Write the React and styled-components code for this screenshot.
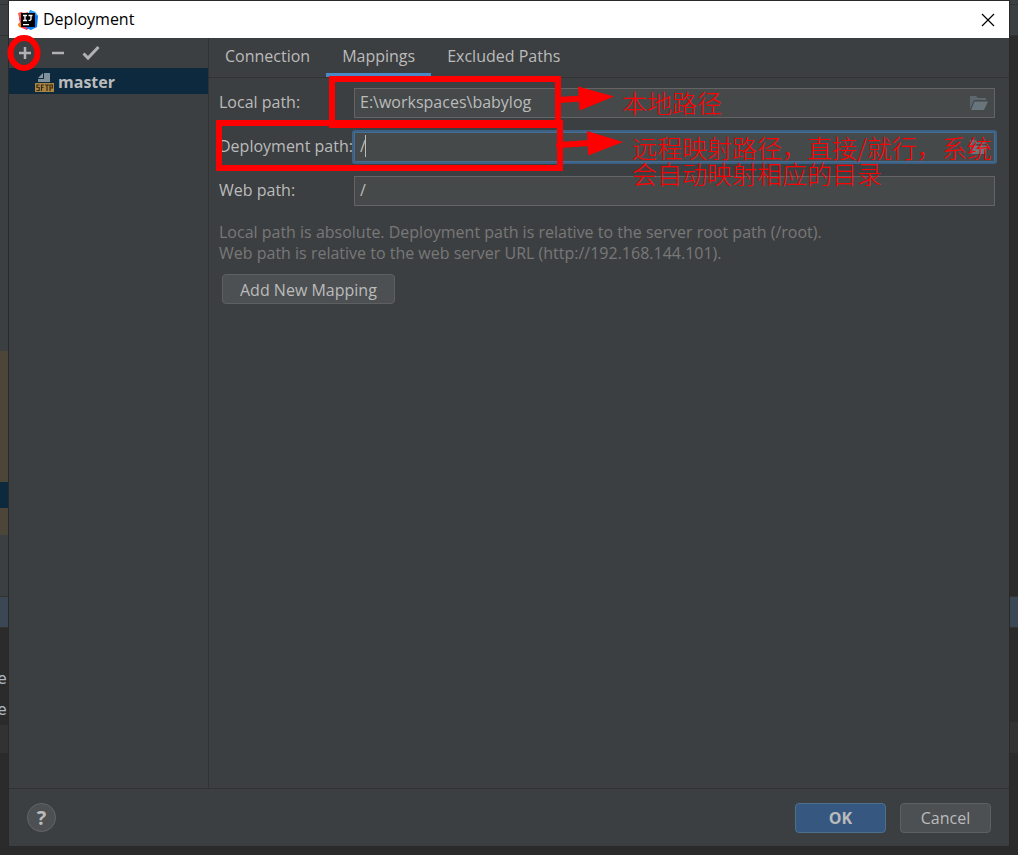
import React, { useState } from "react";
import styled, { createGlobalStyle, css } from "styled-components";

const GlobalStyle = createGlobalStyle`
  * {
    box-sizing: border-box;
  }

  body {
    margin: 0;
    background-color: #2b2b2b;
    color: #bbbbbb;
    font-family: "Open Sans", "Noto Sans", "Noto Sans CJK SC", sans-serif;
    font-size: 16px;
    line-height: 20px;
  }

  button,
  input {
    font: inherit;
    color: inherit;
  }
`;

const Desktop = styled.div`
  display: grid;
  grid-template-columns: 9px minmax(0, 1fr) 9px;
  min-height: 100vh;
  overflow: hidden;
`;

const Gutter = styled.div`
  display: flex;
  flex-direction: column;
  overflow: hidden;
`;

const Strip = styled.div`
  flex: none;
  height: ${(props) => props.$height}px;
  background-color: ${(props) => props.$color || "#2b2b2b"};
  border-top: ${(props) => (props.$line ? "1px solid #323232" : "none")};
`;

const Code = styled.div`
  display: flex;
  justify-content: flex-end;
  flex: none;
  height: 31px;
  padding-right: 2px;
  color: #a9b7c6;
  font-family: "DejaVu Sans Mono", monospace;
  font-size: 16px;
  line-height: 31px;
`;

const Dialog = styled.main`
  position: relative;
  display: flex;
  flex-direction: column;
  margin: 1px 0 9px;
  background-color: #3c3f41;
  box-shadow: 0 0 0 1px #292929;
`;

const TitleBar = styled.header`
  display: flex;
  align-items: center;
  gap: 5px;
  height: 37px;
  padding: 0 14px 0 9px;
  background-color: white;
  color: black;
`;

const Title = styled.h1`
  flex: 1;
  margin: 0;
  padding-bottom: 2px;
  font-size: 16px;
  font-weight: normal;
`;

const IconButton = styled.button`
  display: flex;
  padding: 0;
  border: none;
  background: none;
`;

const Body = styled.div`
  display: flex;
  flex: 1;
`;

const Sidebar = styled.aside`
  flex: none;
  width: 200px;
  border-right: 1px solid #323232;
`;

const Toolbar = styled.div`
  display: flex;
  align-items: center;
  gap: 15px;
  height: 30px;
  padding-left: 7px;
`;

const Server = styled.div`
  display: flex;
  align-items: center;
  gap: 4px;
  height: 26px;
  padding: 2px 0 0 26px;
  background-color: #0d293e;
  font-weight: bold;
`;

const Content = styled.section`
  flex: 1;
  min-width: 0;
`;

const Tabs = styled.div`
  display: flex;
  height: 40px;
  border-bottom: 1px solid #323232;
`;

const Tab = styled.button`
  padding: 0 16px;
  border: none;
  border-bottom: 4px solid
    ${(props) => (props.$active ? "#4a88c7" : "transparent")};
  background: none;
`;

const Form = styled.form`
  padding: 10px 14px 0 10px;
`;

const Row = styled.div`
  display: grid;
  grid-template-columns: 135px minmax(0, 1fr);
  align-items: center;
  margin-bottom: 14px;
`;

const Label = styled.label`
  padding-bottom: 2px;
  white-space: nowrap;
`;

const Field = styled.div`
  position: relative;
  display: flex;
  align-items: center;
  height: 30px;
  border: 1px solid #646464;
  background-color: #45494a;

  ${(props) =>
    props.$focused &&
    css`
      border-color: #466d94;
      box-shadow: 0 0 0 2px #3d6185;
      border-radius: 1px;
    `}
`;

const Input = styled.input`
  flex: 1;
  min-width: 0;
  padding: 0 5px 2px;
  border: none;
  outline: none;
  background: none;
`;

const Caret = styled.span`
  position: absolute;
  left: 10px;
  top: 2px;
  width: 1px;
  height: 22px;
  background-color: #bbbbbb;
`;

const Browse = styled(IconButton)`
  margin-right: 5px;
`;

const Hint = styled.p`
  margin: 0 0 10px;
  padding-top: 2px;
  color: #787878;
  line-height: 21px;
`;

const Button = styled.button`
  min-width: 91px;
  height: 30px;
  padding: 0 17px;
  border: 1px solid ${(props) => (props.$primary ? "#4c708c" : "#5e6060")};
  border-radius: 4px;
  background-color: ${(props) => (props.$primary ? "#365880" : "#4c5052")};
  font-weight: ${(props) => (props.$primary ? "bold" : "normal")};
`;

const AddButton = styled(Button)`
  margin-left: 3px;
  padding-top: 2px;
`;

const Footer = styled.footer`
  display: flex;
  align-items: center;
  gap: 14px;
  height: 58px;
  padding: 0 18px;
  border-top: 1px solid #323232;
`;

const Help = styled.button`
  width: 29px;
  height: 29px;
  margin-right: auto;
  padding: 0;
  border: 1px solid #646667;
  border-radius: 50%;
  background-color: #4c5052;
  font-size: 20px;
  font-weight: bold;
  line-height: 20px;
`;

const Marks = styled.svg`
  position: absolute;
  left: -9px;
  top: -1px;
  pointer-events: none;
`;

const Note = styled.div`
  position: absolute;
  left: ${(props) => props.$left}px;
  top: ${(props) => props.$top}px;
  color: #ff0000;
  font-family: "Noto Sans CJK SC", sans-serif;
  font-size: 25px;
  font-weight: 300;
  line-height: 26px;
  white-space: nowrap;
  pointer-events: none;
`;

const IdeaLogo = () => (
  <svg width="20" height="20" viewBox="0 0 20 20" aria-hidden="true">
    <path d="M0 3l3-1 3 1 4-1v8l-8 2z" fill="#fc5a4b" />
    <path d="M1 8l6-2 4 12-2 2-5-2-4-3 2-3z" fill="#fe315d" />
    <path d="M0 14l3-2 1 6-3-1z" fill="#f97a12" />
    <path d="M12 0l5 2 3 4-1 11-6 3-5-2 7-8z" fill="#087cfa" />
    <path d="M12 0l5 2 3 4-4-1-6-1z" fill="#249ff5" />
    <path d="M3 3h14v14H3z" fill="#000000" />
    <path
      d="M5 5.5h4M7 5.5v5M5 10.5h4M10.5 5.5h4M13 5.5V9q0 1.5-2.500 1.300"
      fill="none"
      stroke="#ffffff"
      strokeWidth="1.3"
    />
    <path d="M5 14h6v1.300H5z" fill="#ffffff" />
  </svg>
);

const SftpIcon = () => (
  <svg width="19" height="19" viewBox="0 0 19 19" aria-hidden="true">
    <path d="M8 0v5H3z" fill="#8796a0" />
    <path d="M9 0h6v9H3V6h6z" fill="#7f909b" />
    <path d="M0 10h19v9H0z" fill="#a98444" />
    <path
      d="M4.500 12H2v2.500h2.200v3H1.500M9 12H6.500v6M6.500 14.500h2M10 12h4M12 12v6M15 18v-6h2.300v3H15"
      fill="none"
      stroke="#3a2d12"
      strokeWidth="1.2"
    />
  </svg>
);

const FolderIcon = () => (
  <svg width="20" height="16" viewBox="0 0 20 16" aria-hidden="true">
    <path d="M1 14V1h6l2 2h8v2H5z" fill="#5d676d" />
    <path d="M5.500 6.500H19L15 15H2z" fill="#69757c" />
  </svg>
);

const PathField = ({ id, label, value, focused, browse }) => {
  const [text, setText] = useState(value);

  return (
    <Row>
      <Label htmlFor={id}>{label}</Label>
      <Field $focused={focused}>
        <Input
          id={id}
          type="text"
          value={text}
          onChange={(event) => setText(event.target.value)}
        />
        {focused && <Caret />}
        {browse && (
          <Browse type="button" aria-label="Browse">
            <FolderIcon />
          </Browse>
        )}
      </Field>
    </Row>
  );
};

const Annotations = () => (
  <>
    <Marks width="640" height="180" viewBox="0 0 640 180" aria-hidden="true">
      <g fill="none" stroke="#ff0000" strokeWidth="6">
        <ellipse cx="24" cy="53" rx="13.5" ry="15" />
        <rect x="332" y="79" width="226" height="46" />
        <rect x="219" y="123" width="341" height="45" />
        <path d="M558 100L582 98.500M559 145L590 143" strokeLinecap="round" />
      </g>
      <path
        d="M578 86.500L614 96.500L579.500 110.500zM587 131L623 142L588 155.500z"
        fill="#ff0000"
      />
    </Marks>
    <Note $left={613} $top={88}>
      本地路径
    </Note>
    <Note $left={623} $top={133}>
      远程映射路径，直接/就行，系统
      <br />
      会自动映射相应的目录
    </Note>
  </>
);

const TABS = ["Connection", "Mappings", "Excluded Paths"];

export default function App() {
  const [activeTab, setActiveTab] = useState("Mappings");

  return (
    <Desktop>
      <GlobalStyle />
      <Gutter>
        <Strip $height={4} $color="#3c3f41" />
        <Strip $height={31} $color="#3c3f41" $line />
        <Strip $height={316} $color="#3c3f41" $line />
        <Strip $height={131} $color="#4b4638" />
        <Strip $height={26} $color="#0d293e" />
        <Strip $height={27} $color="#4b4638" />
        <Strip $height={61} $color="#3c3f41" />
        <Strip $height={31} $color="#3b4754" $line />
        <Strip $height={36} $line />
        <Code>e</Code>
        <Code>e</Code>
        <Strip $height={28} $color="#323232" />
      </Gutter>
      <Dialog>
        <TitleBar>
          <IdeaLogo />
          <Title>Deployment</Title>
          <IconButton type="button" aria-label="Close">
            <svg width="14" height="14" viewBox="0 0 14 14">
              <path
                d="M1 1l12 12M13 1L1 13"
                stroke="#000000"
                strokeWidth="1.2"
              />
            </svg>
          </IconButton>
        </TitleBar>
        <Body>
          <Sidebar>
            <Toolbar>
              <IconButton type="button" aria-label="Add">
                <svg width="18" height="18" viewBox="0 0 18 18">
                  <path d="M9 3v12M3 9h12" stroke="#afb1b3" strokeWidth="2.5" />
                </svg>
              </IconButton>
              <IconButton type="button" aria-label="Remove">
                <svg width="18" height="18" viewBox="0 0 18 18">
                  <path d="M3 9h12" stroke="#afb1b3" strokeWidth="2.5" />
                </svg>
              </IconButton>
              <IconButton type="button" aria-label="Use as default">
                <svg width="18" height="18" viewBox="0 0 18 18">
                  <path
                    d="M1.500 9.500l4.500 4.500L16.500 3"
                    fill="none"
                    stroke="#afb1b3"
                    strokeWidth="3"
                  />
                </svg>
              </IconButton>
            </Toolbar>
            <Server>
              <SftpIcon />
              master
            </Server>
          </Sidebar>
          <Content>
            <Tabs role="tablist">
              {TABS.map((tab) => (
                <Tab
                  key={tab}
                  type="button"
                  role="tab"
                  aria-selected={tab === activeTab}
                  $active={tab === activeTab}
                  onClick={() => setActiveTab(tab)}
                >
                  {tab}
                </Tab>
              ))}
            </Tabs>
            <Form onSubmit={(event) => event.preventDefault()}>
              <PathField
                id="local-path"
                label="Local path:"
                value="E:\workspaces\babylog"
                browse
              />
              <PathField
                id="deployment-path"
                label="Deployment path:"
                value="/"
                focused
                browse
              />
              <PathField id="web-path" label="Web path:" value="/" />
              <Hint>
                Local path is absolute. Deployment path is relative to the
                server root path (/root).
                <br />
                Web path is relative to the web server URL
                (http://192.168.144.101).
              </Hint>
              <AddButton type="button">Add New Mapping</AddButton>
            </Form>
          </Content>
        </Body>
        <Footer>
          <Help type="button" aria-label="Help">
            ?
          </Help>
          <Button type="button" $primary>
            OK
          </Button>
          <Button type="button">Cancel</Button>
        </Footer>
        <Annotations />
      </Dialog>
      <Gutter>
        <Strip $height={4} $color="#3c3f41" />
        <Strip $height={31} $color="#3c3f41" $line />
        <Strip $height={561} $line />
        <Strip $height={31} $color="#3b4754" $line />
        <Strip $height={95} $line />
        <Strip $height={31} $color="#323232" />
      </Gutter>
    </Desktop>
  );
}
